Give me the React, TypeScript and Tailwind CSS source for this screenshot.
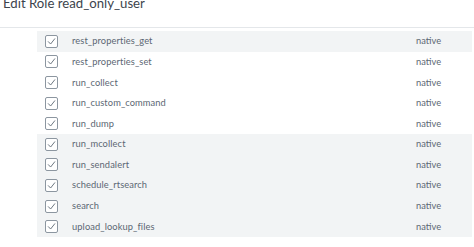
import React from 'react';

const capabilities = [
  'rest_properties_get',
  'rest_properties_set',
  'run_collect',
  'run_custom_command',
  'run_dump',
  'run_mcollect',
  'run_sendalert',
  'schedule_rtsearch',
  'search',
  'upload_lookup_files',
];

// rows that carry the grey background in the screenshot
const shaded = new Set([0, 5, 6, 7, 8, 9]);

function CheckBox() {
  return (
    <span className="flex h-[13px] w-[13px] items-center justify-center rounded-[2px] border border-[#8c96a0] bg-white">
      <svg width="9" height="9" viewBox="0 0 10 10" fill="none">
        <path d="M1.5 5.2 L4 7.8 L8.6 2" stroke="#6b7580" strokeWidth="1.1" strokeLinecap="round" strokeLinejoin="round" />
      </svg>
    </span>
  );
}

export default function App() {
  return (
    <div className="h-[247px] w-[474px] overflow-hidden bg-white" style={{ fontFamily: 'Lato, "Open Sans", sans-serif' }}>
      <div className="flow-root h-[28px] border-b border-[#e4e7ea]">
        <h1 className="-mt-[5px] pl-[3px] text-[13.2px] leading-[16px] text-[#3c444d]">
          Edit Role read_only_user
        </h1>
      </div>

      <div className="ml-[37px] mr-[2px] mt-[3px]">
        {capabilities.map((name, i) => (
          <div
            key={name}
            className={`flex h-[20.6px] items-center text-[9.3px] text-[#5c6773] ${shaded.has(i) ? 'bg-[#f2f4f5]' : 'bg-white'}`}
          >
            <div className="ml-[8px] mr-[14px]">
              <CheckBox />
            </div>
            <span className="flex-1 tracking-[0.1px]">{name}</span>
            <span className="w-[56px]">native</span>
          </div>
        ))}
      </div>
    </div>
  );
}
